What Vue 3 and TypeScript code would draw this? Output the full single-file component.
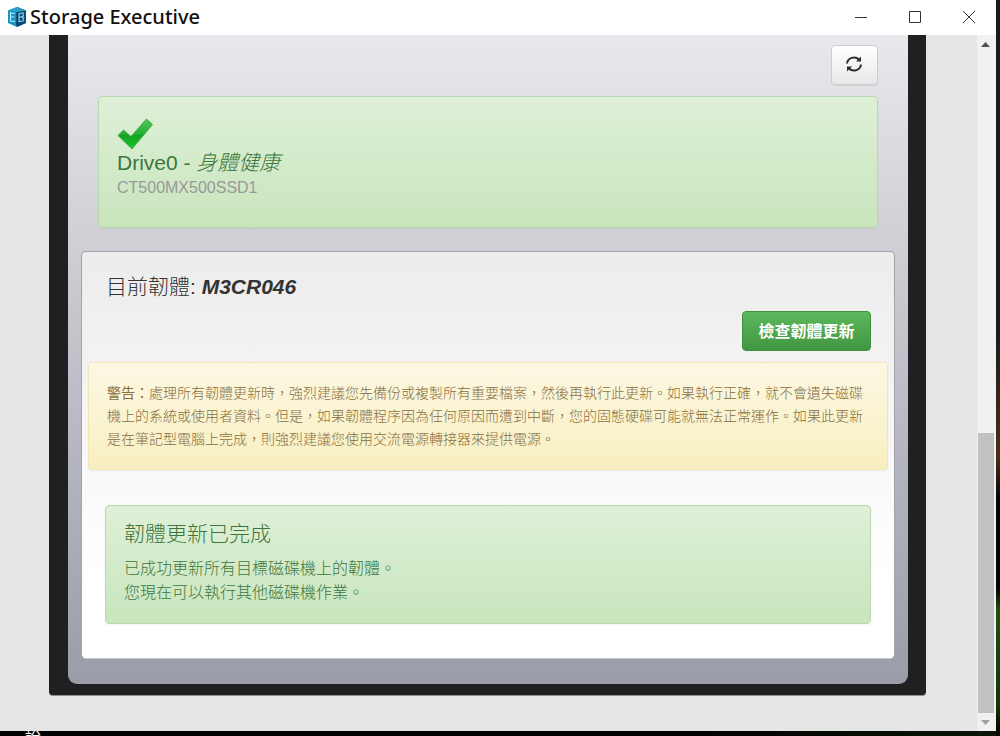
<script setup lang="ts">
interface Drive {
  name: string
  status: string
  model: string
  firmware: string
}

const drive: Drive = {
  name: 'Drive0',
  status: '身體健康',
  model: 'CT500MX500SSD1',
  firmware: 'M3CR046',
}

const warning: string =
  '處理所有韌體更新時，強烈建議您先備份或複製所有重要檔案，然後再執行此更新。如果執行正確，就不會遺失磁碟機上的系統或使用者資料。但是，如果韌體程序因為任何原因而遭到中斷，您的固態硬碟可能就無法正常運作。如果此更新是在筆記型電腦上完成，則強烈建議您使用交流電源轉接器來提供電源。'

const resultLines: string[] = [
  '已成功更新所有目標磁碟機上的韌體。',
  '您現在可以執行其他磁碟機作業。',
]
</script>

<template>
  <div class="desktop" lang="zh-TW">
    <div class="window">
      <header class="titlebar">
        <svg class="logo" viewBox="0 0 20 20" aria-hidden="true">
          <path d="M10 0 19 3.500V16L10 20 1 16V3.500Z" fill="#1593c4" />
          <path d="M10 0 19 3.500V16L10 20Z" fill="#0e4a72" />
          <path d="M10 0 19 3.500 10 5 1 3.500Z" fill="#2f9fc9" />
          <path d="M8 6.500 3.500 6V14L8 14.500M3.500 10H7.500" fill="none" stroke="#b9ecfb" stroke-width="1.200" />
          <path d="M12 6.500 16 6 16.500 9 14 10 16.500 11 16 14 12 14.500ZM12 10H14" fill="none" stroke="#83d4f0" stroke-width="1.200" />
          <path d="M10 5V19" stroke="#08263f" stroke-width="1" />
        </svg>
        <h1>Storage Executive</h1>
        <div class="controls">
          <button type="button" aria-label="最小化">
            <svg viewBox="0 0 14 14"><path d="M1 7.500H13" /></svg>
          </button>
          <button type="button" aria-label="最大化">
            <svg viewBox="0 0 14 14"><path d="M1.500 1.500H12.500V12.500H1.500Z" /></svg>
          </button>
          <button type="button" aria-label="關閉">
            <svg viewBox="0 0 14 14"><path d="M1 1 13 13M13 1 1 13" /></svg>
          </button>
        </div>
      </header>

      <div class="body">
        <main class="frame">
          <div class="screen">
            <div class="toolbar">
              <button class="refresh" type="button" aria-label="重新整理">
                <svg viewBox="0 0 18 18">
                  <path d="M2 8.500A7 6.700 0 0 1 14 4.500M16 9.500A7 6.700 0 0 1 4 13.500" fill="none" stroke="#2b2d30" stroke-width="2" />
                  <path d="M16 1.500V6.500H11ZM2 16.500V11.500H7Z" fill="#2b2d30" />
                </svg>
              </button>
            </div>

            <section class="alert success drive">
              <svg class="check" viewBox="0 0 36 32" aria-hidden="true">
                <defs>
                  <linearGradient id="tick" x1="0" y1="0" x2="0" y2="1">
                    <stop offset="0" stop-color="#4fc75a" />
                    <stop offset="0.500" stop-color="#25ae32" />
                    <stop offset="0.550" stop-color="#12a51f" />
                    <stop offset="1" stop-color="#1dc42e" />
                  </linearGradient>
                </defs>
                <path d="M1 17.500 6.500 12 14 18.500 29.500 1 35.500 6.500 15 31Z" fill="url(#tick)" stroke="#45a950" stroke-width="1" stroke-linejoin="round" />
              </svg>
              <h2>{{ drive.name }} - <em>{{ drive.status }}</em></h2>
              <p class="model">{{ drive.model }}</p>
            </section>

            <section class="card">
              <h2 class="firmware">目前韌體: <strong>{{ drive.firmware }}</strong></h2>
              <div class="actions">
                <button class="primary" type="button">檢查韌體更新</button>
              </div>
              <p class="alert warning"><b>警告：</b>{{ warning }}</p>
              <div class="alert success result">
                <h3>韌體更新已完成</h3>
                <p v-for="line in resultLines" :key="line">{{ line }}</p>
              </div>
            </section>
          </div>
        </main>

        <div class="scrollbar" aria-hidden="true">
          <svg viewBox="0 0 17 18"><path d="M4 12 8.500 7 13 12Z" fill="#505050" /></svg>
          <div class="track"><div class="thumb"></div></div>
          <svg viewBox="0 0 17 18"><path d="M4 7 8.500 12 13 7Z" fill="#a0a0a0" /></svg>
        </div>
      </div>
    </div>
    <div class="behind"><span>說</span></div>
  </div>
</template>

<style>
body {
  margin: 0;
}
</style>

<style scoped>
.desktop {
  display: flex;
  flex-direction: column;
  box-sizing: border-box;
  height: 100vh;
  padding-right: 4px;
  overflow: hidden;
  background: linear-gradient(#181a1c 0%, #1c1a18 45%, #4a2f1c 62%, #050505 68%, #050505 80%, #234d12 83%, #153308 96%, #050805 99%);
  font-family: "Liberation Sans", "Noto Sans CJK TC", sans-serif;
}
h1, h2, h3, p {
  margin: 0;
  font-weight: 300;
}
button {
  box-sizing: border-box;
  padding: 0;
  font-family: inherit;
}
.window {
  display: flex;
  flex: 1;
  flex-direction: column;
  min-height: 0;
  background: #e5e5e5;
}
.titlebar {
  display: flex;
  flex: none;
  align-items: center;
  box-sizing: border-box;
  height: 35px;
  padding: 0 0 2px 7px;
  background: #fff;
}
.logo {
  width: 20px;
  height: 20px;
  margin-right: 3px;
}
h1 {
  flex: 1;
  color: #111;
  font: 500 20px/32px "Noto Sans", "Open Sans", sans-serif;
}
.controls {
  display: flex;
}
.controls button {
  display: grid;
  place-items: center;
  width: 54px;
  height: 32px;
  border: 0;
  background: transparent;
}
.controls svg {
  width: 14px;
  height: 14px;
  fill: none;
  stroke: #333;
}
.body {
  display: flex;
  flex: 1;
  min-height: 0;
}
.frame {
  flex: 1;
  align-self: flex-start;
  min-width: 0;
  margin: 0 51px 35px 49px;
  padding: 0 18px 11px 19px;
  border-bottom: 1px solid #8e8e90;
  border-radius: 0 0 4px 4px;
  background: #202022;
}
.screen {
  padding: 10px 13px 25px;
  border-radius: 0 0 9px 9px;
  background: linear-gradient(#e7e9ed 0%, #cfd0d6 32%, #bcbdc6 55%, #9a9da7 100%);
}
.toolbar {
  display: flex;
  justify-content: flex-end;
  margin-right: 17px;
}
.refresh {
  display: grid;
  place-items: center;
  width: 47px;
  height: 40px;
  padding: 0 1px 3px 0;
  border: 1px solid #ccc;
  border-radius: 4px;
  background: linear-gradient(#fff, #e8e8e8);
  box-shadow: 0 1px 1px #0001;
}
.refresh svg {
  width: 18px;
  height: 18px;
}
.alert {
  border: 1px solid;
  border-radius: 4px;
  box-shadow: 0 1px 2px #0000000d;
}
.success {
  border-color: #b9d9ae;
  background: linear-gradient(#dff0d8, #c8e5bc);
  color: #3c763d;
}
.drive {
  margin: 11px 17px 23px;
  padding: 21px 18px 29px;
}
.check {
  display: block;
  width: 36px;
  height: 32px;
}
.drive h2 {
  font-size: 21px;
  line-height: 26px;
}
.model {
  margin-top: 1px;
  color: #999;
  font-size: 16px;
  line-height: 21px;
}
.card {
  padding: 22px 6px 34px;
  border: 1px solid #a3a4aa;
  border-bottom-color: #c8c8cc;
  border-radius: 5px;
  background: linear-gradient(#ececec, #fff 80%);
}
.firmware {
  padding-left: 18px;
  color: #333;
  font-size: 21px;
  line-height: 26px;
}
.firmware strong {
  font-style: italic;
  font-weight: 700;
}
.actions {
  display: flex;
  justify-content: flex-end;
  margin: 11px 17px 11px 0;
}
.primary {
  width: 129px;
  height: 40px;
  padding-bottom: 3px;
  border: 1px solid #3e8f3e;
  border-radius: 4px;
  background: linear-gradient(#5cb85c, #419641);
  color: #fff;
  font-size: 16px;
  font-weight: 700;
}
.warning {
  padding: 19px 18px 18px;
  border-color: #f3e6b4;
  background: linear-gradient(#fcf8e3, #f8efc0);
  color: #8a6d3b;
  font-size: 14px;
  line-height: 23px;
}
.result {
  margin: 35px 17px 0;
  padding: 17px 18px 18px;
}
.result h3 {
  margin-bottom: 13px;
  font-size: 21px;
  line-height: 21px;
}
.result p {
  font-size: 16px;
  line-height: 24px;
}
.scrollbar {
  display: flex;
  flex-direction: column;
  width: 17px;
  padding-right: 2px;
  background: #f1f1f1;
}
.scrollbar svg {
  flex: none;
  width: 17px;
  height: 18px;
}
.track {
  display: flex;
  flex: 1;
  flex-direction: column;
  justify-content: flex-end;
}
.thumb {
  height: 42.500%;
  margin-left: 1px;
  background: #c1c1c1;
}
.behind {
  flex: none;
  height: 5px;
  padding-left: 25px;
  overflow: hidden;
  background: linear-gradient(90deg, #000 70%, #0b1507);
  color: #fff;
  font-size: 16px;
  line-height: 16px;
}
</style>
